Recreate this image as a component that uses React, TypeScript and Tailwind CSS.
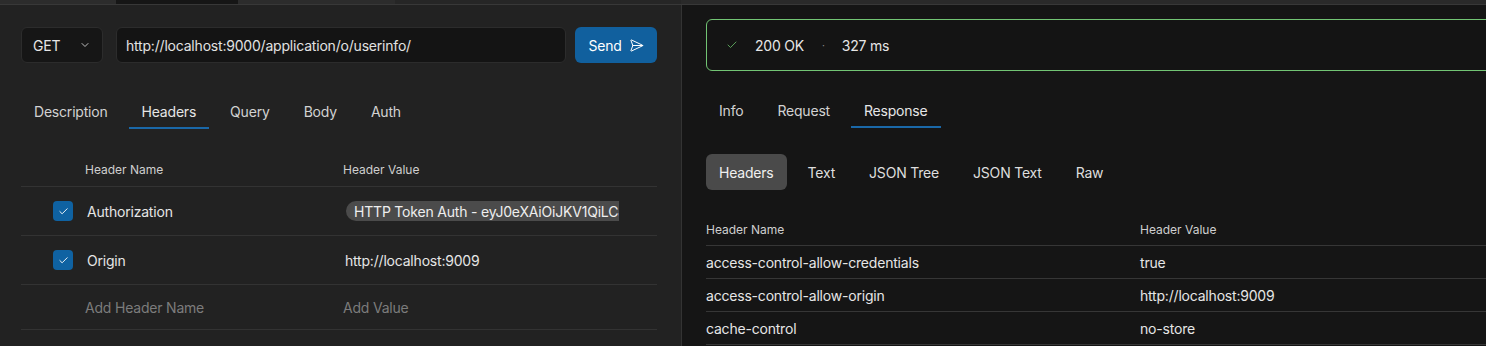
import React from "react";

const font = { fontFamily: "Inter, 'Noto Sans', sans-serif" };

function SendIcon() {
  return (
    <svg width="15" height="15" viewBox="0 0 24 24" fill="none" stroke="currentColor" strokeWidth="1.6" strokeLinecap="round" strokeLinejoin="round">
      <path d="M3.714 3.048a.498.498 0 0 0-.683.627l2.843 7.627a2 2 0 0 1 0 1.396l-2.842 7.627a.498.498 0 0 0 .682.627l18-8.5a.5.5 0 0 0 0-.904z" />
      <path d="M6 12h16" />
    </svg>
  );
}

function Chevron() {
  return (
    <svg width="12" height="12" viewBox="0 0 24 24" fill="none" stroke="currentColor" strokeWidth="2" strokeLinecap="round" strokeLinejoin="round">
      <path d="m6 9 6 6 6-6" />
    </svg>
  );
}

function Check({ className, size = 12, sw = 2 }: { className?: string; size?: number; sw?: number }) {
  return (
    <svg className={className} width={size} height={size} viewBox="0 0 24 24" fill="none" stroke="currentColor" strokeWidth={sw} strokeLinecap="round" strokeLinejoin="round">
      <path d="M20 6 9 17l-5-5" />
    </svg>
  );
}

function Checkbox() {
  return (
    <div className="w-[20px] h-[20px] rounded-[4px] bg-[#0f62a2] flex items-center justify-center text-white">
      <Check size={11} />
    </div>
  );
}

function Tabs({ items, active }: { items: string[]; active: string }) {
  return (
    <div className="flex gap-2">
      {items.map((t) => (
        <div
          key={t}
          className={
            "h-[34px] px-[13px] flex items-center text-[14px] tracking-[-0.2px] border-b-2 " +
            (t === active ? "border-[#1a68a8] text-[#e6e6e6]" : "border-transparent text-[#d2d2d2]")
          }
        >
          {t}
        </div>
      ))}
    </div>
  );
}

export default function App() {
  return (
    <div style={font} className="w-[1486px] h-[346px] overflow-hidden flex flex-col bg-[#222222] text-[#e2e2e2]">
      <div className="h-[5px] flex border-b border-[#383838] shrink-0">
        <div className="w-[116px] bg-[#2c2c2c]" />
        <div className="w-[122px] bg-[#161616]" />
        <div className="w-[157px] bg-[#2c2c2c]" />
        <div className="w-[286px] bg-[#262626]" />
        <div className="flex-1 bg-[#2a2a2a]" />
      </div>
      <div className="flex flex-1 min-h-0">
        {/* Left panel */}
        <div className="w-[682px] shrink-0 border-r border-[#333333] bg-[#222222] pl-[21px] pr-[24px] pt-[22px]">
          <div className="flex items-center">
            <div className="w-[82px] h-[36px] rounded-[6px] bg-[#161616] border border-[#2c2c2c] flex items-center justify-between pl-[11px] pr-[11px] text-[14px] tracking-[-0.2px] text-[#e6e6e6]">
              <span>GET</span>
              <span className="text-[#bdbdbd]"><Chevron /></span>
            </div>
            <div className="ml-[13px] w-[450px] h-[36px] rounded-[6px] bg-[#141414] border border-[#2c2c2c] flex items-center pl-[9px] text-[14px] tracking-[-0.2px] text-[#e2e2e2]">
              http://localhost:9000/application/o/userinfo/
            </div>
            <div className="ml-[9px] w-[82px] h-[36px] rounded-[6px] bg-[#11609e] flex items-center justify-center gap-[7px] text-[14px] tracking-[-0.2px] text-white">
              <span>Send</span>
              <SendIcon />
            </div>
          </div>
          <div className="mt-[32px]">
            <Tabs items={["Description", "Headers", "Query", "Body", "Auth"]} active="Headers" />
          </div>
          <div className="mt-[22px]">
            <div className="h-[36px] pt-[2px] border-b border-[#333333] flex items-center text-[12px] text-[#cfcfcf]">
              <div className="w-[64px]" />
              <div className="w-[258px]">Header Name</div>
              <div>Header Value</div>
            </div>
            <div className="h-[49px] border-b border-[#333333] flex items-center text-[14px] tracking-[-0.2px]">
              <div className="w-[66px] pl-[32px]"><Checkbox /></div>
              <div className="w-[256px] text-[#e6e6e6]">Authorization</div>
              <div className="ml-[3px] w-[273px] overflow-hidden">
                <div className="h-[20px] rounded-l-full bg-[#4b4b4b] pl-[8px] flex items-center whitespace-nowrap text-[#eeeeee] w-[360px]">
                  HTTP Token Auth - eyJ0eXAiOiJKV1QiLCJhbGciOiJSUzI1NiJ9
                </div>
              </div>
            </div>
            <div className="h-[49px] border-b border-[#333333] flex items-center text-[14px] tracking-[-0.2px]">
              <div className="w-[66px] pl-[32px]"><Checkbox /></div>
              <div className="w-[256px] text-[#e6e6e6]">Origin</div>
              <div className="ml-[2px] text-[#e6e6e6]">http://localhost:9009</div>
            </div>
            <div className="h-[45px] border-b border-[#333333] flex items-center text-[14px] tracking-[-0.2px] text-[#7c7c7c]">
              <div className="w-[64px]" />
              <div className="w-[258px]">Add Header Name</div>
              <div>Add Value</div>
            </div>
          </div>
        </div>
        {/* Right panel */}
        <div className="w-[830px] shrink-0 bg-[#151515] pl-[24px] pt-[14px]">
          <div className="w-[800px] h-[52px] rounded-[6px] border border-[#72c474] bg-[#141414] flex items-center pl-[19px] text-[14px] tracking-[-0.2px] text-[#e6e6e6]">
            <Check className="text-[#6abf69]" size={12} sw={1.6} />
            <span className="ml-[17px]">200 OK</span>
            <span className="ml-[18px] text-[#8a8a8a] text-[10px]">·</span>
            <span className="ml-[17px]">327 ms</span>
          </div>
          <div className="mt-[23px]">
            <Tabs items={["Info", "Request", "Response"]} active="Response" />
          </div>
          <div className="mt-[26px] flex gap-2">
            {["Headers", "Text", "JSON Tree", "JSON Text", "Raw"].map((t) => (
              <div
                key={t}
                className={
                  "h-[36px] px-[13px] flex items-center rounded-[6px] text-[14px] tracking-[-0.2px] " +
                  (t === "Headers" ? "bg-[#4a4a4a] text-[#f0f0f0]" : "text-[#dedede]")
                }
              >
                {t}
              </div>
            ))}
          </div>
          <div className="mt-[22px]">
            <div className="h-[34px] pt-[2px] border-b border-[#363636] flex items-center text-[12px] text-[#cfcfcf]">
              <div className="w-[434px]">Header Name</div>
              <div>Header Value</div>
            </div>
            {[
              ["access-control-allow-credentials", "true"],
              ["access-control-allow-origin", "http://localhost:9009"],
              ["cache-control", "no-store"],
            ].map(([k, v]) => (
              <div key={k} className="h-[33px] border-b border-[#363636] flex items-center text-[14px] tracking-[-0.2px] text-[#e6e6e6]">
                <div className="w-[434px]">{k}</div>
                <div>{v}</div>
              </div>
            ))}
          </div>
        </div>
      </div>
    </div>
  );
}
